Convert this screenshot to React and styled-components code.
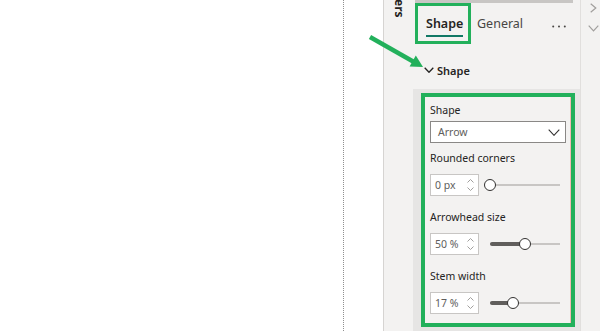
import React from "react";
import styled, { createGlobalStyle } from "styled-components";

const GREEN = "#22b05b";

const GlobalStyle = createGlobalStyle`
  html, body { margin: 0; padding: 0; background: #fff; }
  body { font-family: "Noto Sans", "Open Sans", Arial, sans-serif; }
  * { box-sizing: border-box; }
`;

const Page = styled.div`
  position: relative;
  display: flex;
  width: 600px;
  height: 331px;
  overflow: hidden;
  background: #fff;
`;

const Canvas = styled.div`
  width: 343px;
  flex: none;
  background: #fff;
`;

const Gutter = styled.div`
  width: 41px;
  flex: none;
  border-left: 1px dotted #8f8f8f;
  border-right: 1px solid #d6d4d2;
  background: #fff;
`;

const FiltersRail = styled.div`
  width: 29px;
  flex: none;
  background: #f3f2f1;
  display: flex;
  justify-content: center;
  align-items: flex-start;
`;

const RailLabel = styled.span`
  writing-mode: vertical-rl;
  font-size: 12px;
  font-weight: 700;
  color: #252423;
  line-height: 14px;
  margin-top: -1px;
`;

const FormatPane = styled.div`
  width: 167px;
  flex: none;
  background: #f3f2f1;
  display: flex;
  flex-direction: column;
`;

const SearchEdge = styled.div`
  height: 3px;
  margin: 0 7px 0 2px;
  background: #c8c6c4;
`;

const TabBar = styled.div`
  display: grid;
  grid-template-columns: 56px max-content 1fr;
  align-items: start;
  width: 167px;
  height: 41px;
  padding: 0 14px 0 2px;
`;

const Tab = styled.div`
  font-size: 12.5px;
  line-height: 16px;
  white-space: nowrap;
  color: ${(p) => (p.$active ? "#252423" : "#484644")};
  font-weight: ${(p) => (p.$active ? 600 : 400)};
  ${(p) =>
    p.$highlighted
      ? `border: 3px solid ${GREEN}; height: 41px; padding: 10px 0 0 8px;`
      : `padding: 13px 0 0 6px;`}
`;

const TabText = styled.span`
  display: inline-block;
  padding-bottom: 3px;
  border-bottom: 2px solid ${(p) => (p.$active ? "#117865" : "transparent")};
`;

const More = styled.svg`
  display: block;
  justify-self: end;
  margin-top: 22px;
`;

const SectionHeader = styled.div`
  display: flex;
  align-items: center;
  gap: 3px;
  margin-top: 16px;
  padding-left: 11px;
  height: 20px;
  font-size: 11px;
  font-weight: 600;
  color: #252423;
`;

const Card = styled.div`
  flex: 1;
  margin-top: 9px;
  background: #e6e5e4;
  padding: 4px 5px 4px 8px;
`;

const Highlight = styled.div`
  border: 4px solid ${GREEN};
  background: #f3f2f1;
  padding: 5px 5px 9px 5px;
  box-shadow: inset -1px 0 0 #f2b9b5;
`;

const Field = styled.div`
  margin-top: ${(p) => p.$top || 0}px;
`;

const Label = styled.div`
  font-size: 10.5px;
  line-height: 16px;
  color: #252423;
  margin-bottom: ${(p) => p.$gap}px;
`;

const Dropdown = styled.div`
  width: 136px;
  height: 22px;
  background: #fff;
  border: 1px solid #8a8886;
  display: flex;
  align-items: center;
  justify-content: space-between;
  padding: 0 5px 0 7px;
  font-size: 10.5px;
  color: #605e5c;
`;

const Row = styled.div`
  display: flex;
  align-items: center;
`;

const NumberBox = styled.div`
  width: 49px;
  height: 22px;
  background: #fff;
  border: 1px solid #c8c6c4;
  display: flex;
  align-items: center;
  justify-content: space-between;
  padding: 0 4px 0 4px;
  font-size: 10.5px;
  color: #605e5c;
`;

const Spinner = styled.div`
  display: flex;
  flex-direction: column;
  gap: 4px;
`;

const Slider = styled.div`
  position: relative;
  margin-left: 5px;
  width: 83px;
  height: 14px;
`;

const Track = styled.div`
  position: absolute;
  left: 6px;
  right: 6px;
  top: 6px;
  height: 2px;
  background: #c8c6c4;
`;

const Fill = styled.div`
  position: absolute;
  left: 6px;
  top: 5px;
  height: 4px;
  border-radius: 2px;
  background: #605e5c;
`;

const Thumb = styled.div`
  position: absolute;
  top: 1px;
  width: 12px;
  height: 12px;
  border-radius: 50%;
  background: #fff;
  border: 1.5px solid #323130;
`;

const SideStrip = styled.div`
  width: 20px;
  flex: none;
  border-left: 1px solid #e1dfdd;
  background: #f3f2f1;
  display: flex;
  flex-direction: column;
  align-items: flex-start;
`;

const StripIcon = styled.svg`
  display: block;
  margin-left: ${(p) => p.$left}px;
  margin-top: ${(p) => p.$top}px;
`;

const ArrowMark = styled.svg`
  position: absolute;
  left: 360px;
  top: 28px;
`;

const Chevron = ({ w = 10, h = 6, color = "#252423", sw = 1.3 }) => (
  <svg width={w} height={h} viewBox={`0 0 ${w} ${h}`}>
    <polyline
      points={`0.7,0.7 ${w / 2},${h - 0.7} ${w - 0.7},0.7`}
      fill="none"
      stroke={color}
      strokeWidth={sw}
    />
  </svg>
);

const SpinUp = () => (
  <svg width="7" height="4" viewBox="0 0 7 4">
    <polyline points="0.5,3.5 3.5,0.5 6.5,3.5" fill="none" stroke="#a19f9d" strokeWidth="1" />
  </svg>
);
const SpinDown = () => (
  <svg width="7" height="4" viewBox="0 0 7 4">
    <polyline points="0.5,0.5 3.5,3.5 6.5,0.5" fill="none" stroke="#a19f9d" strokeWidth="1" />
  </svg>
);

const TRACK = 71;

const NumberSlider = ({ value, pos }) => (
  <Row>
    <NumberBox>
      <span>{value}</span>
      <Spinner>
        <SpinUp />
        <SpinDown />
      </Spinner>
    </NumberBox>
    <Slider>
      <Track />
      {pos > 0 && <Fill style={{ width: pos * TRACK }} />}
      <Thumb style={{ left: pos * TRACK }} />
    </Slider>
  </Row>
);

export default function App() {
  return (
    <>
      <GlobalStyle />
      <Page>
        <Canvas />
        <Gutter />
        <FiltersRail>
          <RailLabel>ers</RailLabel>
        </FiltersRail>
        <FormatPane>
          <SearchEdge />
          <TabBar>
            <Tab $active $highlighted>
              <TabText $active>Shape</TabText>
            </Tab>
            <Tab>
              <TabText>General</TabText>
            </Tab>
            <More width="14" height="3" viewBox="0 0 14 3" aria-label="More options">
              <circle cx="1.2" cy="1.5" r="1" fill="#484644" />
              <circle cx="7" cy="1.5" r="1" fill="#484644" />
              <circle cx="12.8" cy="1.5" r="1" fill="#484644" />
            </More>
          </TabBar>
          <SectionHeader>
            <Chevron />
            <span>Shape</span>
          </SectionHeader>
          <Card>
            <Highlight>
              <Field>
                <Label $gap={3}>Shape</Label>
                <Dropdown>
                  <span>Arrow</span>
                  <Chevron w={12} h={7} color="#323130" sw={1.1} />
                </Dropdown>
              </Field>
              <Field $top={7}>
                <Label $gap={8}>Rounded corners</Label>
                <NumberSlider value="0 px" pos={0} />
              </Field>
              <Field $top={13}>
                <Label $gap={8}>Arrowhead size</Label>
                <NumberSlider value="50 %" pos={0.5} />
              </Field>
              <Field $top={13}>
                <Label $gap={8}>Stem width</Label>
                <NumberSlider value="17 %" pos={0.33} />
              </Field>
            </Highlight>
          </Card>
        </FormatPane>
        <SideStrip>
          <StripIcon $left={9} $top={3} width="7" height="10" viewBox="0 0 7 10">
            <polyline points="0.7,0.7 5.8,5 0.7,9.3" fill="none" stroke="#a19f9d" strokeWidth="1.2" />
          </StripIcon>
          <StripIcon $left={7} $top={12} width="11" height="7" viewBox="0 0 11 7">
            <polyline points="0.7,0.7 5.5,5.8 10.3,0.7" fill="none" stroke="#a19f9d" strokeWidth="1.2" />
          </StripIcon>
        </SideStrip>
        <ArrowMark width="70" height="50" viewBox="0 0 70 50">
          <line x1="10" y1="9" x2="54" y2="34" stroke={GREEN} strokeWidth="4.5" />
          <polygon points="63,39 49.6,38.5 55.8,27.6" fill={GREEN} />
        </ArrowMark>
      </Page>
    </>
  );
}
